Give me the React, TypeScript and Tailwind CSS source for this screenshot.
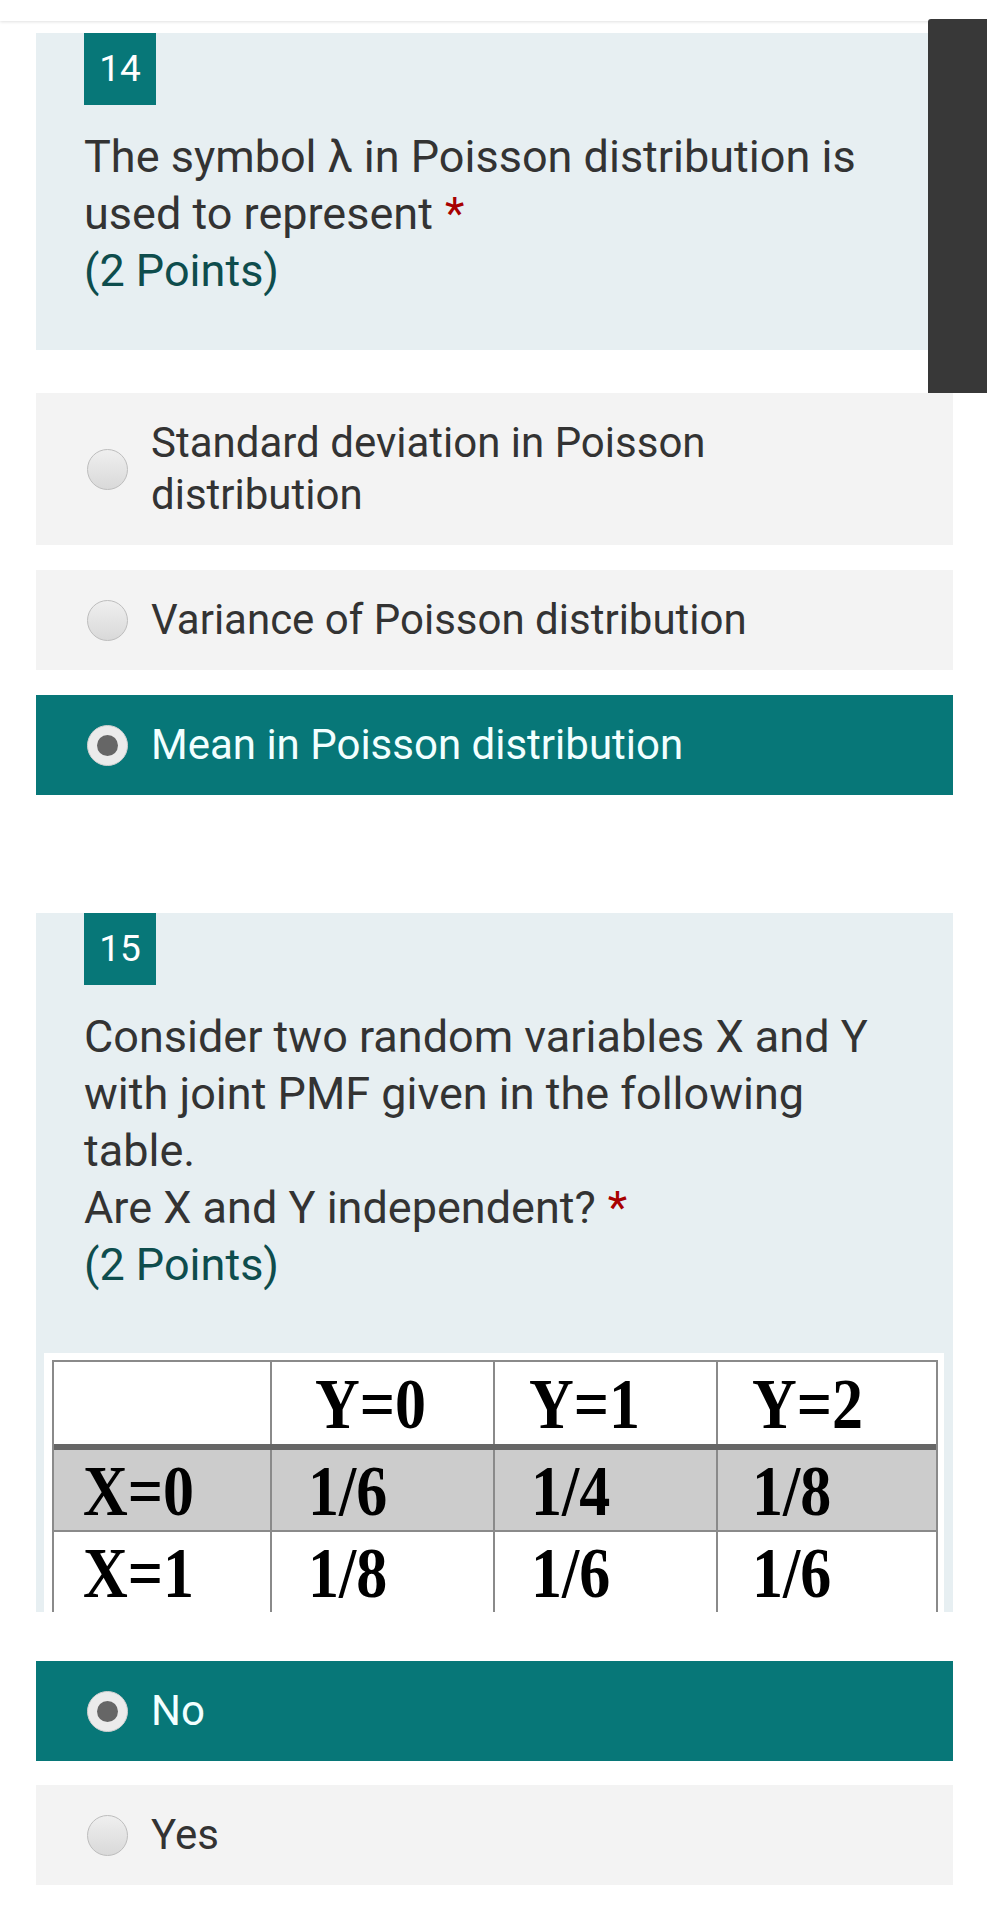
import React from "react";

type Choice = { label: string; selected?: boolean };

// Round radio mark, grey when empty, ring + dark dot when picked
function Radio({ checked }: { checked?: boolean }) {
  if (checked) {
    return (
      <span className="flex h-[41px] w-[41px] shrink-0 items-center justify-center rounded-full border border-[#cfcfcf] bg-[#ebebeb]">
        <span className="h-[21px] w-[21px] rounded-full bg-[#666666]" />
      </span>
    );
  }
  return (
    <span className="h-[41px] w-[41px] shrink-0 rounded-full border border-[#bdbdbd] bg-linear-to-b from-[#efefef] to-[#d9d9d9]" />
  );
}

function Option({ label, selected }: Choice) {
  return (
    <div
      className={
        selected
          ? "flex items-center gap-[23px] bg-[#077778] py-[24px] pl-[51px] pr-[48px] text-[#f2ffff]"
          : "flex items-center gap-[23px] bg-[#f3f3f3] py-[24px] pl-[51px] pr-[48px] text-[#333333]"
      }
    >
      <Radio checked={selected} />
      <span className="text-[42px] leading-[52px]">{label}</span>
    </div>
  );
}

function Badge({ n }: { n: number }) {
  return (
    <div className="flex h-[72px] w-[72px] items-center justify-center bg-[#077778] text-[37px] text-white">
      {n}
    </div>
  );
}

function QuestionTitle({ lines }: { lines: string[] }) {
  return (
    <div className="mt-[23px] text-[45px] leading-[57px] text-[#333333]">
      {lines.map((l, i) => (
        <div key={i}>
          {l}
          {i === lines.length - 1 && <span className="ml-[12px] text-[#a80000]">*</span>}
        </div>
      ))}
      <div className="text-[#0e4d4d]">(2 Points)</div>
    </div>
  );
}

// joint pmf table, drawn like the pasted picture in the form
const cellText = "inline-block origin-center scale-y-[1.17] font-['Liberation_Serif',serif] text-[62px] font-bold leading-none text-black";

function PmfTable() {
  const rows = [
    ["X=0", "1/6", "1/4", "1/8"],
    ["X=1", "1/8", "1/6", "1/6"],
  ];
  return (
    <div className="mt-[60px] mb-[6px] ml-[8px] mr-[9px] bg-white pt-[7px] pl-[8px] pr-[6px]">
      <div className="border-t-2 border-l-2 border-r-2 border-[#8a8a8a]">
        {/* header */}
        <div className="grid h-[82px] grid-cols-[218px_223px_223px_1fr]">
          <div className="border-r-2 border-[#8a8a8a]" />
          <div className="flex items-center border-r-2 border-[#8a8a8a] pl-[43px]">
            <span className={cellText}>Y=0</span>
          </div>
          <div className="flex items-center border-r-2 border-[#8a8a8a] pl-[34px]">
            <span className={cellText}>Y=1</span>
          </div>
          <div className="flex items-center pl-[34px]">
            <span className={cellText}>Y=2</span>
          </div>
        </div>
        <div className="h-[6px] bg-[#666666]" />
        {rows.map((r, i) => (
          <div
            key={i}
            className={
              i === 0
                ? "grid h-[82px] grid-cols-[218px_223px_223px_1fr] border-b-2 border-[#8a8a8a] bg-[#cccccc]"
                : "grid h-[80px] grid-cols-[218px_223px_223px_1fr] bg-white"
            }
          >
            {r.map((c, j) => (
              <div
                key={j}
                className={
                  j === 0
                    ? "flex items-center border-r-2 border-[#8a8a8a] pl-[29px]"
                    : j < 3
                    ? "flex items-center border-r-2 border-[#8a8a8a] pl-[36px]"
                    : "flex items-center pl-[34px]"
                }
              >
                <span className={cellText}>{c}</span>
              </div>
            ))}
          </div>
        ))}
      </div>
    </div>
  );
}

export default function App() {
  return (
    <div className="relative min-h-[1920px] w-full overflow-hidden bg-white font-['Roboto',sans-serif]">
      <div className="h-[21px] bg-white shadow-[0_1px_3px_rgba(0,0,0,0.12)]" />

      <div className="pl-[36px] pr-[34px] pb-[40px]">
        {/* question 14 */}
        <div className="mt-[12px] bg-[#e7eff2] pl-[48px] pr-[48px] pb-[51px]">
          <Badge n={14} />
          <QuestionTitle lines={["The symbol λ in Poisson distribution is used to represent"]} />
        </div>

        <div className="mt-[43px] flex flex-col gap-[25px]">
          <Option label="Standard deviation in Poisson distribution" />
          <Option label="Variance of Poisson distribution" />
          <Option label="Mean in Poisson distribution" selected />
        </div>

        {/* question 15 */}
        <div className="mt-[118px] bg-[#e7eff2]">
          <div className="pl-[48px] pr-[48px]">
            <Badge n={15} />
            <QuestionTitle
              lines={[
                "Consider two random variables X and Y with joint PMF given in the following table.",
                "Are X and Y independent?",
              ]}
            />
          </div>
          <PmfTable />
        </div>

        <div className="mt-[49px] flex flex-col gap-[24px]">
          <Option label="No" selected />
          <Option label="Yes" />
        </div>
      </div>

      {/* scroll thumb overlay */}
      <div className="absolute right-0 top-[19px] h-[374px] w-[59px] rounded-tl-[3px] bg-[#383838]" />
    </div>
  );
}
